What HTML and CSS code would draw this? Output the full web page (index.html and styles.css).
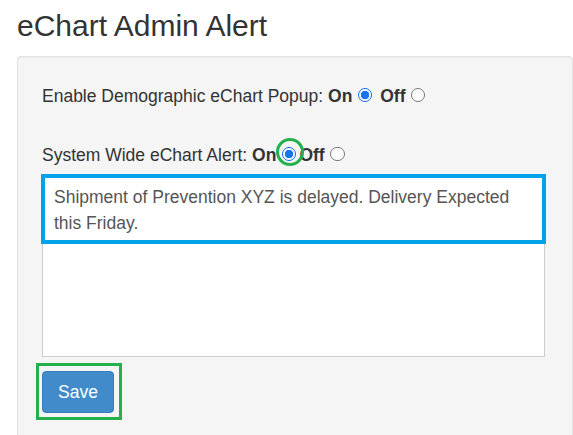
FILE: index.html
```
<!DOCTYPE html>
<html>
<head>
<meta charset="utf-8">
<link rel="stylesheet" href="styles.css">
</head>
<body>
<div class="page">
  <h1 class="title">eChart Admin Alert</h1>
  <div class="well">
    <div class="row row-first">Enable Demographic eChart Popup: <b>On</b><input class="radio" type="radio" name="popup" checked> <b>Off</b><input class="radio" type="radio" name="popup"></div>
    <div class="row row-second">System Wide eChart Alert: <b>On</b><span class="ring-mark"><input class="radio" type="radio" name="alert" checked></span><b>Off</b><input class="radio" type="radio" name="alert"></div>
    <div class="area-wrap">
      <textarea class="area">Shipment of Prevention XYZ is delayed. Delivery Expected this Friday.</textarea>
      <span class="blue-mark"></span>
    </div>
    <div class="actions">
      <span class="btn-mark"><button class="btn" type="button">Save</button></span>
    </div>
  </div>
</div>
</body>
</html>
```
FILE: styles.css
```
html, body {
  margin: 0;
  padding: 0;
  overflow: hidden;
  background: #fff;
}
.page {
  padding: 9px 0 0 17px;
  font-family: "Liberation Sans", Arial, sans-serif;
  color: #333;
  width: 556px;
}
.title {
  margin: 0 0 14px 0;
  font-size: 30px;
  font-weight: normal;
  line-height: 33px;
  color: #333;
}
.well {
  box-sizing: border-box;
  height: 379px;
  background: #f5f5f5;
  border: 1px solid #e3e3e3;
  border-bottom: none;
  border-radius: 4px 4px 0 0;
  box-shadow: inset 0 1px 1px rgba(0,0,0,0.05);
  padding: 27px 24px 0 24px;
}
.row {
  font-size: 17.5px;
  line-height: 25px;
  white-space: nowrap;
}
.row b {
  font-weight: bold;
}
.row-second {
  margin-top: 34px;
}
.radio {
  -webkit-appearance: none;
  appearance: none;
  box-sizing: border-box;
  width: 14.5px;
  height: 14.5px;
  margin: 3px 3px 0 5.5px;
  border: 1px solid #767676;
  border-radius: 50%;
  background: #fff;
  vertical-align: 0px;
}
.radio:checked {
  border: 1.5px solid #0b6cf0;
  background: radial-gradient(circle, #1a73f0 0 4px, #fff 4.5px);
}
.ring-mark {
  position: relative;
  display: inline-block;
}
.ring-mark::after {
  content: "";
  position: absolute;
  box-sizing: border-box;
  width: 28px;
  height: 28px;
  left: 0px;
  top: -5px;
  border: 3px solid #22b14c;
  border-radius: 50%;
}
.area-wrap {
  position: relative;
  width: 503px;
  margin-top: 7px;
}
.area {
  display: block;
  box-sizing: border-box;
  width: 503px;
  height: 182px;
  margin: 0;
  padding: 8px 11px;
  border: 1px solid #ccc;
  border-radius: 0;
  background: #fff;
  font-family: "Liberation Sans", Arial, sans-serif;
  font-size: 17.5px;
  line-height: 26px;
  color: #555;
  resize: none;
  overflow: hidden;
  outline: none;
}
.blue-mark {
  position: absolute;
  box-sizing: border-box;
  left: -1px;
  top: -1px;
  width: 505px;
  height: 70px;
  border: 4px solid #00a2e8;
}
.actions {
  margin-top: 14px;
}
.btn-mark {
  position: relative;
  display: inline-block;
}
.btn-mark::after {
  content: "";
  position: absolute;
  box-sizing: border-box;
  left: -6px;
  top: -8px;
  width: 86px;
  height: 57px;
  border: 3px solid #22b14c;
}
.btn {
  display: block;
  box-sizing: border-box;
  width: 72px;
  height: 42px;
  padding: 0;
  border: 1px solid #357ebd;
  border-radius: 4px;
  background: #428bca;
  color: #fff;
  font-family: "Liberation Sans", Arial, sans-serif;
  font-size: 17.5px;
  line-height: 40px;
  text-align: center;
}
```
